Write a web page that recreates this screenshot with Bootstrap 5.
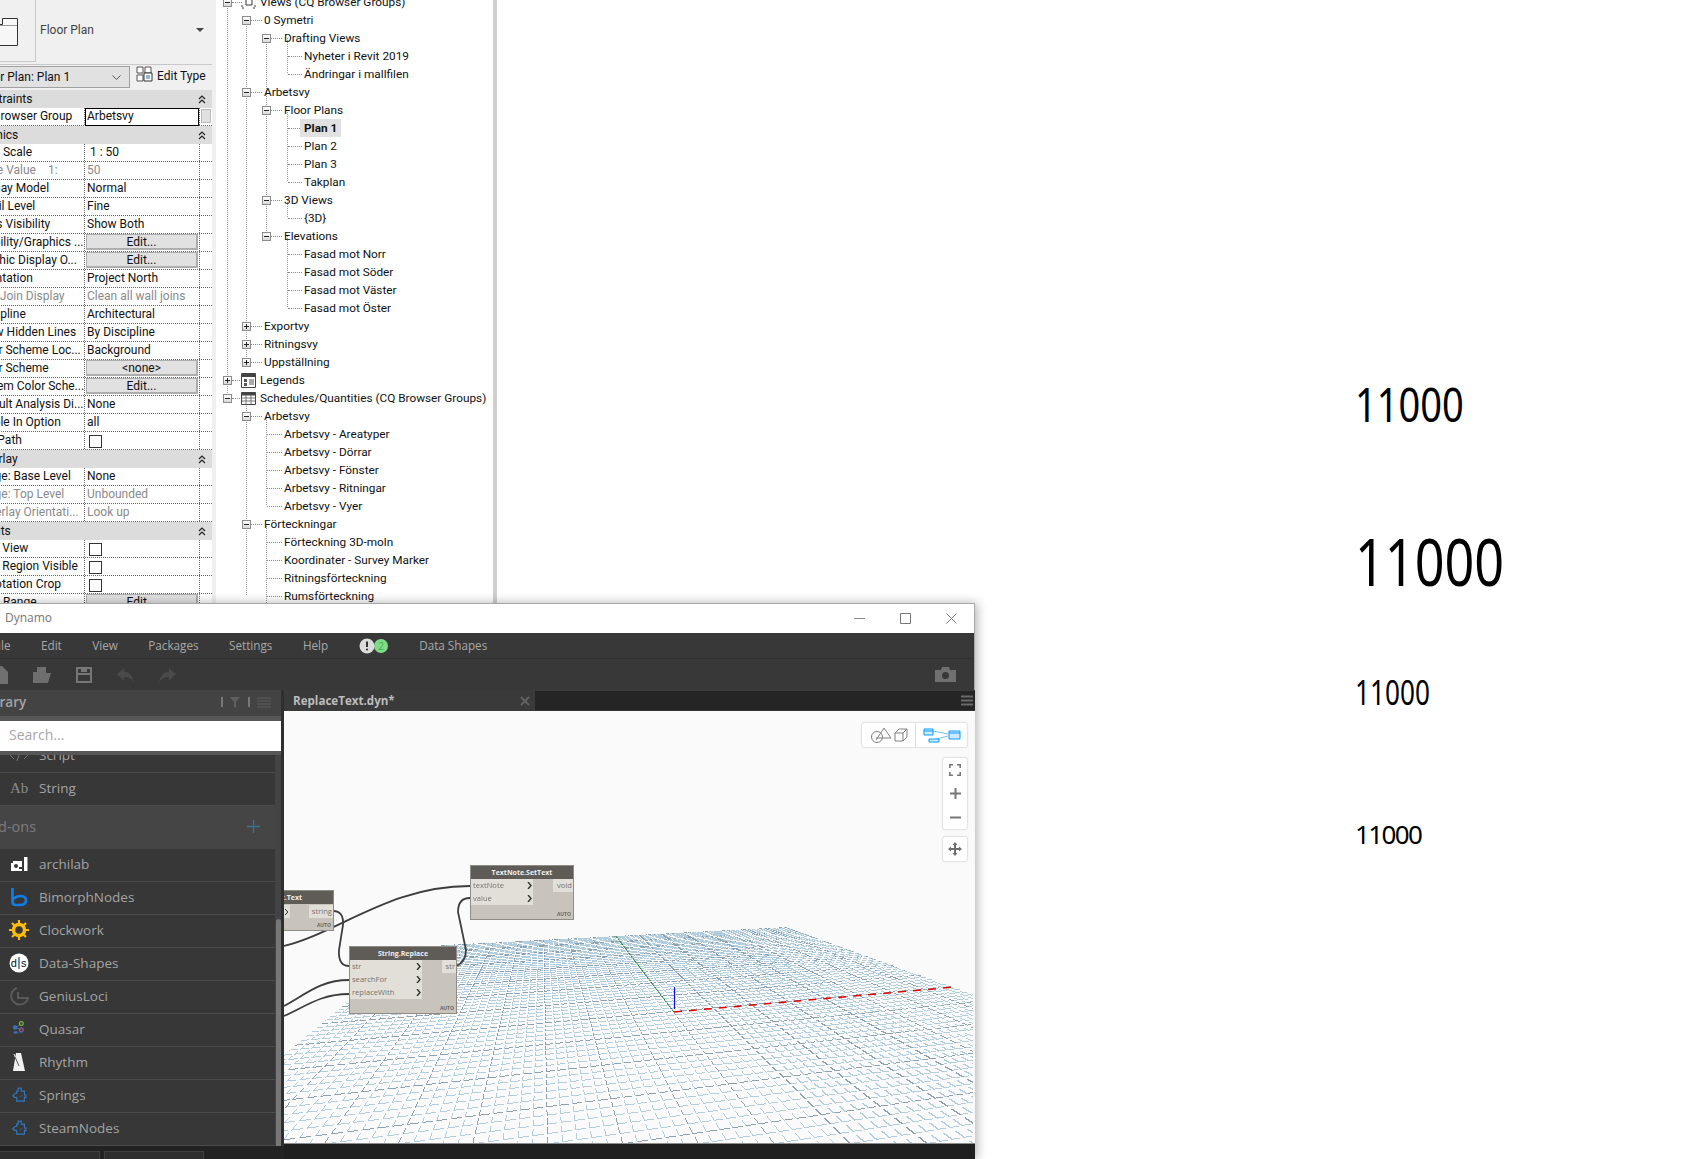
<!DOCTYPE html>
<html lang="sv">
<head>
  <meta charset="UTF-8">
  <meta name="viewport" content="width=device-width, initial-scale=1.0">
  <title>Revit och Dynamo</title>
  <link href="https://cdn.jsdelivr.net/npm/bootstrap@5.3.0/dist/css/bootstrap.min.css" rel="stylesheet">
  <style>
    html, body { height: 100%; margin: 0; overflow: hidden; background: #fff; }
    body { font-family: Roboto, "Liberation Sans", sans-serif; font-size: 12px; color: #111; }
    .desk { width: 1694px; height: 1159px; overflow: hidden; position: relative; }

    /* properties palette */
    .props { width: 212px; flex: none; background: #f0f0f0; }
    .props-inner { width: 238px; margin-left: -26px; }
    .type-box { height: 65px; border-bottom: 1px solid #c8c8c8; }
    .type-thumb { width: 62px; height: 62px; border: 1px solid #c8c8c8; border-top: 0; padding-right: 17px; padding-top: 3px; }
    .type-name { color: #444; padding-left: 4px; padding-bottom: 5px; }
    .inst-row { height: 25px; padding-top: 1px; }
    .inst-select { width: 156px; height: 22px; background: #e1e1e1; border: 1px solid #a0a0a0; padding-left: 2px; }
    .edit-type-icon { margin-left: 6px; margin-right: 4px; }
    .edit-type-text { padding-top: 1px; }
    .prop-head { height: 18px; background: #dcdcdc; padding-right: 6px; font-size: 12px; }
    .prop-head > span { margin-left: -3px; }
    .prop-row { height: 18px; background: #fff; border-bottom: 1px dotted #666; }
    .prop-name { width: 111px; flex: none; white-space: pre; overflow: hidden; border-right: 1px dotted #666; height: 100%; line-height: 17px; }
    .prop-val { width: 115px; flex: none; white-space: nowrap; padding-left: 2px; border-right: 1px dotted #666; height: 100%; line-height: 17px; }
    .is-grey { color: #8a8a8a; }
    .val-indent { padding-left: 5px; }
    .edit-input { border: 1px solid #000; height: 18px; line-height: 15px; padding-left: 1px; background: #fff; }
    .edit-spin { width: 10px; height: 14px; background: #e1e1e1; border: 1px solid #bbb; margin: 1px 1px; }
    .edit-btn { display: block; height: 16px; margin: 0 0 0 1px; width: 112px; background: #e1e1e1; border: 1px solid #adadad; border-bottom-width: 2px; border-right-width: 2px; text-align: center; line-height: 15px; }
    .chk { display: block; width: 13px; height: 13px; border: 1px solid #333; margin: 3px 0 0 2px; background: #fff; }

    /* project browser */
    .gap-strip { width: 4px; flex: none; background: #f0f0f0; }
    .browser { width: 277px; flex: none; overflow: hidden; position: relative; font-size: 11.8px; }
    .browser-edge { width: 4px; flex: none; background: #cfcfcf; }
    .tree { margin-top: -7px; }
    .tree-row { height: 18px; white-space: nowrap; }
    .tree-label { padding-top: 1px; }
    .tree-box { width: 9px; height: 9px; flex: none; border: 1px solid #8c8c8c; background: linear-gradient(#fff, #d8d8d8); position: relative; }
    .tree-box::before { content: ""; position: absolute; left: 1px; right: 1px; top: 3px; height: 1px; background: #222; }
    .tree-box.is-closed::after { content: ""; position: absolute; top: 1px; bottom: 1px; left: 3px; width: 1px; background: #222; }
    .tree-dots { flex: none; height: 0; border-top: 1px dotted #888; }
    .tree-sel { background: #e1e1e1; font-weight: 700; padding: 0 4px; margin-left: -4px; line-height: 18px; }
    .tree-lines { position: absolute; left: 0; top: 0; }

    /* annotations on the drawing */
    .anno { position: absolute; left: 1355px; font-family: "Noto Sans", sans-serif; color: #000; line-height: 1; transform-origin: left center; }
    .anno-a { top: 381px; font-size: 47px; transform: scaleX(.81); }
    .anno-b { top: 527px; font-size: 66px; transform: scaleX(.79); }
    .anno-c { top: 675px; font-size: 34px; transform: scaleX(.77); }
    .anno-d { top: 821px; font-size: 26px; letter-spacing: -1.6px; }

    /* dynamo window */
    .dyn { position: absolute; left: -30px; top: 603px; width: 1005px; height: 556px; background: #222; border-top: 1px solid #a8a8a8; border-right: 1px solid #a8a8a8; box-shadow: 2px 0 10px rgba(0,0,0,.3); font-family: "Open Sans", sans-serif; color: #aaa; display: flex; flex-direction: column; }
    .dyn-title { height: 29px; flex: none; background: #fff; color: #777; font-size: 12px; padding-left: 35px; padding-bottom: 2px; }
    .win-btn { width: 46px; text-align: center; }
    .dyn-menu { height: 26px; flex: none; background: #383838; border-bottom: 1px solid #303030; padding-left: 22px; gap: 30.5px; font-size: 11.7px; color: #a8a8a8; }
    .dyn-tools { height: 31px; flex: none; background: #383838; padding-left: 22px; padding-right: 18px; gap: 25px; }
    .dyn-body { flex: 1; min-height: 0; }
    .lib { width: 311px; flex: none; background: #373737; }
    .lib-head { height: 26px; background: #434343; padding-left: 10px; padding-right: 9px; padding-bottom: 2px; font-size: 13.5px; font-weight: 600; color: #a5a5a5; }
    .lib-search { height: 39px; background: #575757; padding: 5px 0 4px; }
    .lib-input { height: 30px; background: #fff; color: #a6a6a6; font-size: 14px; padding-left: 39px; line-height: 28px; }
    .lib-scroller { flex: 1; min-height: 0; overflow: hidden; }
    .lib-list { width: 305px; flex: none; overflow: hidden; height: 391px; }
    .lib-items { margin-top: -15px; }
    .lib-item { height: 33px; border-bottom: 1px solid #4b4b4b; font-size: 13.5px; color: #a4a4a4; padding-left: 39px; padding-bottom: 2px; gap: 10px; }
    .lib-icon { width: 20px; height: 20px; flex: none; }
    .lib-group { height: 43px; background: #454545; color: #7c7c7c; font-size: 14.5px; padding-left: 10px; padding-right: 15px; padding-bottom: 2px; }
    .lib-track { width: 6px; flex: none; background: #444; height: 391px; position: relative; }
    .lib-thumb { position: absolute; left: 1px; right: 0; top: 164px; bottom: 0; background: #777; border-radius: 3px 3px 0 0; }
    .split { width: 3px; flex: none; background: #2f2f2f; }
    .lib-foot { height: 13px; flex: none; background: #222; gap: 4px; }
    .foot-tab { width: 130px; height: 8px; margin-top: 5px; background: #2e2e2e; border: 1px solid #3f3f3f; border-bottom: 0; }
    .foot-tab + .foot-tab { width: 100px; }
    .work { width: 691px; flex: none; display: flex; flex-direction: column; }
    .tabs { height: 21px; flex: none; background: #383838; }
    .tab-cur { width: 250px; background: #3a3a3a; color: #bcbcbc; font-weight: 700; font-size: 11.6px; padding-left: 9px; padding-right: 4px; }
    .tab-rest { flex: 1; background: #252525; border: 1px solid #3c3c3c; border-bottom-color: #333; border-right: 0; padding-right: 2px; }
    .graph { height: 433px; flex: none; position: relative; background: #fafafa; border-bottom: 1px solid #8c8c8c; overflow: hidden; }
    .graph-foot { flex: 1; background: #1f1f1f; }
    #gridCanvas, .wires { position: absolute; left: 0; top: 0; }
    .node { position: absolute; background: #c8c4bc; border: 1px solid #8f8c85; font-size: 7.6px; color: #77736c; font-family: "Open Sans", sans-serif; }
    .node-head { height: 13px; background: #5f5b56; color: #eee; font-weight: 700; text-align: center; line-height: 13px; font-size: 7px; white-space: nowrap; }
    .node-in { background: #e2dfd8; position: absolute; left: 0; padding-left: 2px; }
    .node-out { background: #e2dfd8; position: absolute; right: 0; padding: 0 1px; text-align: right; line-height: 13px; }
    .node-port { height: 13px; line-height: 13px; position: relative; white-space: nowrap; }
    .node-port svg { position: absolute; right: 1px; top: 3px; }
    .node-auto { position: absolute; right: 2px; bottom: 1px; font-size: 5px; font-weight: 700; color: #6b675f; line-height: 7px; }
    .over-tools { position: absolute; background: #fff; border-radius: 2px; box-shadow: 0 0 2px rgba(0,0,0,.35); }
    .view-toggle { left: 578px; top: 12px; width: 105px; height: 24px; }
    .view-part { height: 100%; }
    .view-part + .view-part { border-left: 1px solid #ddd; }
    .zoom-tools { left: 659px; top: 47px; width: 24px; height: 71px; }
    .pan-tool { left: 659px; top: 126px; width: 24px; height: 24px; }
  </style>
</head>
<body>
<div class="desk">
  <div class="d-flex h-100">
    <div class="props overflow-hidden">
      <div class="props-inner">
        <div class="type-box d-flex">
          <div class="type-thumb d-flex align-items-center justify-content-end">
            <svg width="30" height="28" viewBox="0 0 30 28"><path d="M.5 6.500H14.500V.5H29.500V27.500H.5Z" fill="#f7f7f7" stroke="#333"/><path d="M.5 7.500H29" stroke="#999"/></svg>
          </div>
          <div class="flex-grow-1 d-flex align-items-center justify-content-between pe-2 type-name">
            <span>Floor Plan</span>
            <svg width="8" height="4"><path d="M0 0H8L4 4Z" fill="#444"/></svg>
          </div>
        </div>
        <div class="inst-row d-flex align-items-start">
          <div class="inst-select d-flex align-items-center justify-content-between pe-2"><span>Floor Plan: Plan 1</span>
            <svg width="9" height="5"><path d="M.5.5L4.5 4.5L8.5.5" fill="none" stroke="#555"/></svg></div>
          <svg class="edit-type-icon" width="17" height="16" viewBox="0 0 17 16"><path d="M1 1H7V7H1ZM9 1H15V7H9ZM1 9H7V15H1Z" fill="#fff" stroke="#555"/><path d="M8 7H16V15H8Z" fill="#fff" stroke="#333"/><path d="M10 10H14M10 12H14" stroke="#2a6fb0"/></svg>
          <span class="edit-type-text">Edit Type</span>
        </div>
        <div id="propRows"></div>
      </div>
    </div>
    <div class="gap-strip"></div>
    <div class="browser">
      <svg class="tree-lines" width="277" height="603" stroke="#999" stroke-dasharray="1 1" fill="none">
        <path d="M11.5 0V376M11.5 380V398M30.5 20V362M30.5 398V596M50.5 38V236M50.5 416V506M50.5 524V603M71.5 38V74M71.5 110V182M71.5 200V218M71.5 236V308"/>
      </svg>
      <div class="tree position-relative" id="tree"></div>
    </div>
    <div class="browser-edge"></div>
  </div>

  <div class="anno anno-a">11000</div>
  <div class="anno anno-b">11000</div>
  <div class="anno anno-c">11000</div>
  <div class="anno anno-d">11000</div>

  <div class="dyn">
    <div class="dyn-title d-flex align-items-center justify-content-between">
      <span>Dynamo</span>
      <div class="d-flex align-items-center">
        <div class="win-btn"><svg width="11" height="11"><path d="M0 5.500H11" stroke="#888"/></svg></div>
        <div class="win-btn"><svg width="11" height="11"><path d="M.5.5H10.500V10.500H.5Z" fill="none" stroke="#777"/></svg></div>
        <div class="win-btn"><svg width="11" height="11"><path d="M.5.5L10.500 10.500M10.500.5L.5 10.500" stroke="#777"/></svg></div>
      </div>
    </div>
    <div class="dyn-menu d-flex align-items-center">
      <span>File</span><span>Edit</span><span>View</span><span>Packages</span><span>Settings</span><span>Help</span>
      <svg width="30" height="16" viewBox="0 0 30 16"><circle cx="22" cy="8" r="7" fill="#7fdc86"/><text x="22" y="11.500" font-size="10" font-family="Open Sans" text-anchor="middle" fill="#4aa953">2</text><circle cx="8" cy="8" r="7.500" fill="#dcdcdc"/><path d="M8 3.500V9" stroke="#333" stroke-width="2"/><circle cx="8" cy="11.500" r="1.100" fill="#333"/></svg>
      <span>Data Shapes</span>
    </div>
    <div class="dyn-tools d-flex align-items-center">
      <svg width="16" height="18" viewBox="0 0 16 18"><path d="M0 0H10L16 6V18H0Z" fill="#707070"/></svg>
      <svg width="18" height="16" viewBox="0 0 18 16"><path d="M4 0H13V6H18L15 16H0V5H4Z" fill="#6e6e6e"/></svg>
      <svg width="16" height="16" viewBox="0 0 16 16"><path d="M1 1H15V15H1Z" fill="none" stroke="#777" stroke-width="2"/><path d="M1 7H15" stroke="#777" stroke-width="2"/><path d="M5 2H11V5H5Z" fill="#777"/></svg>
      <svg width="17" height="14" viewBox="0 0 17 14"><path d="M7 0V4C12 4 15 7 17 14C14 10 11 9 7 9V13L0 6Z" fill="#4a4a4a"/></svg>
      <svg width="17" height="14" viewBox="0 0 17 14"><path d="M10 0V4C5 4 2 7 0 14C3 10 6 9 10 9V13L17 6Z" fill="#4a4a4a"/></svg>
      <svg class="ms-auto" width="21" height="15" viewBox="0 0 21 15"><path d="M0 3H6L7 0H14L15 3H21V15H0Z" fill="#707070"/><circle cx="10.500" cy="8.500" r="3.500" fill="#383838"/></svg>
    </div>
    <div class="dyn-body d-flex">
      <div class="d-flex flex-column">
        <div class="d-flex flex-grow-1">
          <div class="lib d-flex flex-column">
            <div class="lib-head d-flex align-items-center justify-content-between">
              <span>Library</span>
              <svg width="52" height="14" viewBox="0 0 52 14"><path d="M2 2V12M29 2V12" stroke="#888" stroke-width="1.500"/><path d="M10 2H20L16 7V13L14 12V7Z" fill="#5e5e5e"/><path d="M37 3H51M37 6H51M37 9H51M37 12H51" stroke="#5e5e5e"/></svg>
            </div>
            <div class="lib-search"><div class="lib-input">Search...</div></div>
            <div class="d-flex lib-scroller">
              <div class="lib-list">
                <div class="lib-items" id="libItems"></div>
              </div>
              <div class="lib-track"><div class="lib-thumb"></div></div>
            </div>
          </div>
          <div class="split"></div>
        </div>
        <div class="lib-foot d-flex">
          <div class="foot-tab"></div><div class="foot-tab"></div>
        </div>
      </div>
      <div class="work">
        <div class="tabs d-flex">
          <div class="tab-cur d-flex align-items-center justify-content-between">
            <span>ReplaceText.dyn*</span>
            <svg width="10" height="10"><path d="M1 1L9 9M9 1L1 9" stroke="#626262" stroke-width="2"/></svg>
          </div>
          <div class="tab-rest d-flex align-items-center justify-content-end">
            <svg width="12" height="11"><path d="M0 1.500H12M0 5.500H12M0 9.500H12" stroke="#6a6a6a" stroke-width="2"/></svg>
          </div>
        </div>
        <div class="graph">
          <canvas id="gridCanvas" width="690" height="433"></canvas>
          <svg class="wires" width="690" height="433" fill="none" stroke="#3d3d3d" stroke-width="1.800">
            <path d="M0 235C56 221 106 175 186 175"/>
            <path d="M49 200Q60 200 59 214L55 239Q54 255 65 255"/>
            <path d="M0 295C21 284 36 269 65 269"/>
            <path d="M0 305C21 296 36 283 65 283"/>
            <path d="M172 255Q182 251 182 239L174 201Q174 187 186 187"/>
          </svg>

          <div class="node" style="left:-60px;top:179px;width:110px;height:41px">
            <div class="node-head">Element.Text</div>
            <div class="node-in" style="top:14px;left:59px;width:6px;height:13px"><svg width="4" height="6" style="position:absolute;left:1px;top:4px"><path d="M0 0L3 3L0 6" fill="none" stroke="#333"/></svg></div>
            <div class="node-out" style="top:14px;width:24px">string</div>
            <div class="node-auto">AUTO</div>
          </div>

          <div class="node" style="left:65px;top:235px;width:108px;height:68px">
            <div class="node-head">String.Replace</div>
            <div class="node-in" style="top:13px;width:72px">
              <div class="node-port">str<svg width="5" height="7"><path d="M1 0L4 3.500L1 7" fill="none" stroke="#333" stroke-width="1.400"/></svg></div>
              <div class="node-port">searchFor<svg width="5" height="7"><path d="M1 0L4 3.500L1 7" fill="none" stroke="#333" stroke-width="1.400"/></svg></div>
              <div class="node-port">replaceWith<svg width="5" height="7"><path d="M1 0L4 3.500L1 7" fill="none" stroke="#333" stroke-width="1.400"/></svg></div>
            </div>
            <div class="node-out" style="top:13px;width:14px">str</div>
            <div class="node-auto">AUTO</div>
          </div>

          <div class="node" style="left:186px;top:154px;width:104px;height:55px">
            <div class="node-head">TextNote.SetText</div>
            <div class="node-in" style="top:13px;width:62px">
              <div class="node-port">textNote<svg width="5" height="7"><path d="M1 0L4 3.500L1 7" fill="none" stroke="#333" stroke-width="1.400"/></svg></div>
              <div class="node-port">value<svg width="5" height="7"><path d="M1 0L4 3.500L1 7" fill="none" stroke="#333" stroke-width="1.400"/></svg></div>
            </div>
            <div class="node-out" style="top:13px;width:20px">void</div>
            <div class="node-auto">AUTO</div>
          </div>

          <div class="over-tools view-toggle d-flex">
            <div class="view-part d-flex align-items-center justify-content-center" style="width:53px">
              <svg width="38" height="16" viewBox="0 0 38 16" fill="none" stroke="#808080"><circle cx="7" cy="10" r="5.500"/><path d="M6 13L14 1L21 11H6"/><path d="M25 6H33V14H25ZM25 6L29 2H37V10L33 14M33 6L37 2"/></svg>
            </div>
            <div class="view-part d-flex align-items-center justify-content-center" style="width:52px">
              <svg width="38" height="15" viewBox="0 0 38 15"><path d="M10 3L25 6M10 12L25 8" stroke="#6ec0f5"/><path d="M1 1H10V7H1ZM26 3H37V11H26Z" fill="#cfeaff" stroke="#0a9bf5"/><path d="M1 3H10M26 5H37" stroke="#0a9bf5"/><path d="M6 11H16V14H6Z" fill="#cfeaff" stroke="#0a9bf5"/></svg>
            </div>
          </div>
          <div class="over-tools zoom-tools d-flex flex-column align-items-center justify-content-around">
            <svg width="12" height="12" fill="none" stroke="#777" stroke-width="1.600"><path d="M.8 4V.8H4M8 .8H11.200V4M.8 8V11.200H4M8 11.200H11.200V8"/></svg>
            <svg width="11" height="11"><path d="M0 5.500H11M5.500 0V11" stroke="#777" stroke-width="2"/></svg>
            <svg width="11" height="11"><path d="M0 5.500H11" stroke="#777" stroke-width="2"/></svg>
          </div>
          <div class="over-tools pan-tool d-flex align-items-center justify-content-center">
            <svg width="14" height="14" viewBox="0 0 14 14"><path d="M7 0L9.500 3H8V6H11V4.500L14 7L11 9.500V8H8V11H9.500L7 14L4.500 11H6V8H3V9.500L0 7L3 4.500V6H6V3H4.500Z" fill="#6f6f6f"/></svg>
          </div>
        </div>
        <div class="graph-foot"></div>
      </div>
    </div>
  </div>
</div>

<script src="https://cdn.jsdelivr.net/npm/bootstrap@5.3.0/dist/js/bootstrap.bundle.min.js"></script>
<script>
  // egenskaper: [typ, namn, värde]
  const props = [
    ['h', 'Constraints'],
    ['input', 'CQ Browser Group', 'Arbetsvy'],
    ['h', 'Graphics'],
    ['indent', 'View Scale', '1 : 50'],
    ['grey', 'Scale Value    1:', '50'],
    ['t', 'Display Model', 'Normal'],
    ['t', 'Detail Level', 'Fine'],
    ['t', 'Parts Visibility', 'Show Both'],
    ['btn', 'Visibility/Graphics ...', 'Edit...'],
    ['btn', 'Graphic Display O...', 'Edit...'],
    ['t', 'Orientation', 'Project North'],
    ['grey', 'Wall Join Display', 'Clean all wall joins'],
    ['t', 'Discipline', 'Architectural'],
    ['t', 'Show Hidden Lines', 'By Discipline'],
    ['t', 'Color Scheme Loc...', 'Background'],
    ['btn', 'Color Scheme', '&lt;none&gt;'],
    ['btn', 'System Color Sche...', 'Edit...'],
    ['t', 'Default Analysis Di...', 'None'],
    ['t', 'Visible In Option', 'all'],
    ['chk', 'Sun Path'],
    ['h', 'Underlay'],
    ['t', 'Range: Base Level', 'None'],
    ['grey', 'Range: Top Level', 'Unbounded'],
    ['grey', 'Underlay Orientati...', 'Look up'],
    ['h', 'Extents'],
    ['chk', 'Crop View'],
    ['chk', 'Crop Region Visible'],
    ['chk', 'Annotation Crop'],
    ['btn', 'View Range', 'Edit...']
  ];
  const chevrons = '<svg width="8" height="9" fill="none" stroke="#222" stroke-width="1.200"><path d="M1 4L4 1L7 4M1 8L4 5L7 8"/></svg>';
  document.getElementById('propRows').innerHTML = props.map(([kind, name, val]) => {
    if (kind === 'h') return `<div class="prop-head d-flex align-items-center justify-content-between"><span>${name}</span>${chevrons}</div>`;
    let cell = `<div class="prop-val">${val}</div>`;
    if (kind === 'indent') cell = `<div class="prop-val val-indent">${val}</div>`;
    if (kind === 'grey') cell = `<div class="prop-val is-grey">${val}</div>`;
    if (kind === 'btn') cell = `<div class="prop-val ps-0"><span class="edit-btn">${val}</span></div>`;
    if (kind === 'chk') cell = `<div class="prop-val"><span class="chk"></span></div>`;
    if (kind === 'input') cell = `<div class="prop-val p-0"><div class="edit-input">${val}</div></div><div class="edit-spin"></div>`;
    return `<div class="prop-row d-flex"><div class="prop-name ${kind === 'grey' ? 'is-grey' : ''}">${name}</div>${cell}</div>`;
  }).join('');

  // projektbläddrare: [linjens x, text x, namn, rutan, ikon]
  const tree = [
    [12, 44, 'Views (CQ Browser Groups)', 'open', 'view'],
    [31, 48, '0 Symetri', 'open'],
    [51, 68, 'Drafting Views', 'open'],
    [72, 88, 'Nyheter i Revit 2019'],
    [72, 88, 'Ändringar i mallfilen'],
    [31, 48, 'Arbetsvy', 'open'],
    [51, 68, 'Floor Plans', 'open'],
    [72, 88, 'Plan 1', '', 'sel'],
    [72, 88, 'Plan 2'],
    [72, 88, 'Plan 3'],
    [72, 88, 'Takplan'],
    [51, 68, '3D Views', 'open'],
    [72, 88, '{3D}'],
    [51, 68, 'Elevations', 'open'],
    [72, 88, 'Fasad mot Norr'],
    [72, 88, 'Fasad mot Söder'],
    [72, 88, 'Fasad mot Väster'],
    [72, 88, 'Fasad mot Öster'],
    [31, 48, 'Exportvy', 'closed'],
    [31, 48, 'Ritningsvy', 'closed'],
    [31, 48, 'Uppställning', 'closed'],
    [12, 44, 'Legends', 'closed', 'legend'],
    [12, 44, 'Schedules/Quantities (CQ Browser Groups)', 'open', 'sched'],
    [31, 48, 'Arbetsvy', 'open'],
    [51, 68, 'Arbetsvy - Areatyper'],
    [51, 68, 'Arbetsvy - Dörrar'],
    [51, 68, 'Arbetsvy - Fönster'],
    [51, 68, 'Arbetsvy - Ritningar'],
    [51, 68, 'Arbetsvy - Vyer'],
    [31, 48, 'Förteckningar', 'open'],
    [51, 68, 'Förteckning 3D-moln'],
    [51, 68, 'Koordinater - Survey Marker'],
    [51, 68, 'Ritningsförteckning'],
    [51, 68, 'Rumsförteckning']
  ];
  const treeIcons = {
    view: '<svg class="me-1" width="15" height="14" style="margin-left:-1px" fill="none" stroke="#333"><path d="M5 1H11V10H5Z"/><path d="M1 10V13H4M14 10V13H11" stroke-dasharray="2 1"/></svg>',
    legend: '<svg class="me-1" width="15" height="15" style="margin-left:-1px"><path d="M.5.5H14.500V14.500H.5Z" fill="#fff" stroke="#444"/><path d="M.5 2.500H14.500" stroke="#444" stroke-width="3"/><path d="M3 6H6V9H3ZM3 10H6V13H3Z" fill="#555"/><path d="M8 7H13M8 9H13M8 11H13" stroke="#555"/></svg>',
    sched: '<svg class="me-1" width="15" height="13" style="margin-left:-1px"><path d="M.5.5H14.500V12.500H.5Z" fill="#fff" stroke="#444"/><path d="M.5 2H14.500" stroke="#444" stroke-width="3"/><path d="M5 3V12M10 3V12M1 6H14M1 9H14" stroke="#777"/></svg>'
  };
  document.getElementById('tree').innerHTML = tree.map(([lx, tx, name, box, extra]) => {
    const boxHtml = box ? `<span class="tree-box ${box === 'closed' ? 'is-closed' : ''}"></span>` : '';
    const left = box ? lx - 5 : lx;
    const used = box ? left + 9 : left;
    const icon = treeIcons[extra];
    const dotsW = tx - used - (icon ? 18 : 2);
    const label = extra === 'sel' ? `<span class="tree-sel">${name}</span>` : `<span class="tree-label">${name}</span>`;
    return `<div class="tree-row d-flex align-items-center" style="padding-left:${left}px">${boxHtml}<span class="tree-dots" style="width:${dotsW}px"></span>${icon ? '' : '<span style="width:2px"></span>'}${icon || ''}${label}</div>`;
  }).join('');

  // biblioteket
  const puzzle = '<svg class="lib-icon" viewBox="-3 -3 26 26"><path d="M9 1H13V5H17V10H19V13H17V18H7V13H4L2 11L5 8H7V5H9Z" fill="none" stroke="#2f79bd" stroke-width="1.500"/><path d="M11 13L14 10" stroke="#2f79bd"/></svg>';
  const lib = [
    ['Script', '<svg class="lib-icon" viewBox="0 0 20 20" fill="none" stroke="#777"><path d="M5 6L1 10L5 14M15 6L19 10L15 14M12 4L8 16"/></svg>'],
    ['String', '<svg class="lib-icon" viewBox="0 0 20 20"><text x="1" y="15" font-family="Liberation Serif" font-size="15" fill="#8a8a8a">Ab</text></svg>'],
    ['group', 'Add-ons'],
    ['archilab', '<svg class="lib-icon" viewBox="0 0 20 20"><path d="M2 7H13V17H2Z" fill="#fff"/><circle cx="7" cy="12" r="2" fill="#373737"/><path d="M2 7H4V9H2ZM10 15H13V13H10Z" fill="#373737"/><path d="M15 3H18.500V17H15Z" fill="#fff"/></svg>'],
    ['BimorphNodes', '<svg class="lib-icon" viewBox="0 0 20 20"><path d="M3.500 1V15C3.500 17 5 18 7 18H11C15 18 17 16 17 13.500C17 11 15 9 12 9C9 9 6 10 3.500 13" fill="none" stroke="#0f7fe6" stroke-width="2.600"/></svg>'],
    ['Clockwork', '<svg class="lib-icon" viewBox="0 0 20 20"><circle cx="10" cy="10" r="5.500" fill="none" stroke="#fdbb0a" stroke-width="3.500"/><path d="M10 0V20M0 10H20M3 3L17 17M17 3L3 17" stroke="#fdbb0a" stroke-width="2.200" stroke-dasharray="3.500 13 3.500"/></svg>'],
    ['Data-Shapes', '<svg class="lib-icon" viewBox="0 0 20 20"><circle cx="10" cy="10" r="9.500" fill="#fff"/><text x="1.800" y="13.500" font-family="Liberation Sans" font-size="11" fill="#111">d</text><path d="M10 4V16" stroke="#111"/><text x="12" y="13.500" font-family="Liberation Sans" font-size="11" fill="#111">s</text></svg>'],
    ['GeniusLoci', '<svg class="lib-icon" viewBox="0 0 20 20" fill="none" stroke="#5a5a5a" stroke-width="2"><path d="M8 2A8.500 8.500 0 1 0 19 12H9V6"/></svg>'],
    ['Quasar', '<svg class="lib-icon" viewBox="-3 -2 26 26"><path d="M6 9L13 4M6 9L13 12" stroke="#4a8a5a"/><circle cx="5" cy="9" r="3" fill="#3f6fb5"/><circle cx="13" cy="4" r="2.500" fill="none" stroke="#6fbf3f" stroke-width="1.500"/><circle cx="13" cy="12" r="2.500" fill="none" stroke="#a04fa8" stroke-width="1.500"/><path d="M3 14H8V17H3Z" fill="#3f6fb5"/><path d="M9 16H15" stroke="#2a6fa0"/></svg>'],
    ['Rhythm', '<svg class="lib-icon" viewBox="0 0 20 20"><path d="M7 1H12L16 19H4Z" fill="#f2f2f2"/><path d="M10 14L5 2" stroke="#f2f2f2"/><path d="M10 14L6 5" stroke="#555"/></svg>'],
    ['Springs', puzzle],
    ['SteamNodes', puzzle]
  ];
  document.getElementById('libItems').innerHTML = lib.map(([name, html]) => {
    if (name === 'group') return `<div class="lib-group d-flex align-items-center justify-content-between"><span>${html}</span><svg width="13" height="13"><path d="M0 6.500H13M6.500 0V13" stroke="#3a7388" stroke-width="1.400"/></svg></div>`;
    return `<div class="lib-item d-flex align-items-center">${html}<span>${name}</span></div>`;
  }).join('');

  // rutnätet i 3D-vyn, punktvis så att det blir samma moaré
  function drawGrid() {
    const cv = document.getElementById('gridCanvas');
    const ctx = cv.getContext('2d');
    const W = cv.width, H = cv.height;
    const ox = 284, oy = 711;
    const p0 = [674 - ox, 1012 - oy], p1 = [955 - ox, 987 - oy], p2 = [787 - ox, 927 - oy], p3 = [616 - ox, 936 - oy];
    const dx1 = p1[0] - p2[0], dx2 = p3[0] - p2[0], sx = p0[0] - p1[0] + p2[0] - p3[0];
    const dy1 = p1[1] - p2[1], dy2 = p3[1] - p2[1], sy = p0[1] - p1[1] + p2[1] - p3[1];
    const den = dx1 * dy2 - dx2 * dy1;
    const g = (sx * dy2 - dx2 * sy) / den, h = (dx1 * sy - sx * dy1) / den;
    const a = p1[0] - p0[0] + g * p1[0], b = p3[0] - p0[0] + h * p3[0], c = p0[0];
    const d = p1[1] - p0[1] + g * p1[1], e = p3[1] - p0[1] + h * p3[1], f = p0[1];
    // inversen (adjunkt)
    const A = e - f * h, B = c * h - b, C = b * f - c * e;
    const D = f * g - d, E = a - c * g, F = c * d - a * f;
    const G = d * h - e * g, HH = b * g - a * h, I = a * e - b * d;
    const N = 40, major = 5;
    const uv = (x, y) => { const w = G * x + HH * y + I; return [(A * x + B * y + C) / w, (D * x + E * y + F) / w, w]; };
    const img = ctx.createImageData(W, H);
    const put = (x, y, col) => { const i = (y * W + x) * 4; img.data[i] = col[0]; img.data[i + 1] = col[1]; img.data[i + 2] = col[2]; img.data[i + 3] = 255; };
    const light = [178, 205, 222], dark = [140, 160, 176];
    for (let y = 200; y < H - 1; y++) {
      for (let x = 0; x < W - 1; x++) {
        const [u, v] = uv(x + .5, y + .5);
        if (Math.abs(u) > 1 || Math.abs(v) > 1) continue;
        const [ur, vr] = uv(x + 1.5, y + .5), [ud, vd] = uv(x + .5, y + 1.5);
        const uu = u * N, vv = v * N;
        const hitU = Math.floor(uu) !== Math.floor(ur * N) && Math.abs(ur - u) >= Math.abs(ud - u) * .5 || (Math.floor(uu) !== Math.floor(ud * N) && Math.abs(ud - u) > Math.abs(ur - u));
        const hitV = Math.floor(vv) !== Math.floor(vd * N) && Math.abs(vd - v) >= Math.abs(vr - v) * .5 || (Math.floor(vv) !== Math.floor(vr * N) && Math.abs(vr - v) > Math.abs(vd - v));
        // streckat längs linjen
        const fu = ((uu % 1) + 1) % 1, fv = ((vv % 1) + 1) % 1;
        const dashU = fv < .7, dashV = fu < .7;
        if (hitU && dashU) {
          const i = Math.round(Math.max(uu, ur * N, ud * N));
          put(x, y, i % major === 0 ? dark : light);
        } else if (hitV && dashV) {
          const i = Math.round(Math.max(vv, vd * N, vr * N));
          put(x, y, i % major === 0 ? dark : light);
        }
      }
    }
    ctx.putImageData(img, 0, 0);
    // axlarna
    ctx.lineWidth = 1.5;
    ctx.strokeStyle = '#e00000';
    ctx.setLineDash([8, 7]);
    ctx.beginPath(); ctx.moveTo(p0[0], p0[1]); ctx.lineTo(p1[0], p1[1]); ctx.stroke();
    ctx.lineWidth = 1;
    ctx.strokeStyle = '#0a7a0a';
    ctx.setLineDash([2, 1]);
    ctx.beginPath(); ctx.moveTo(p0[0], p0[1]); ctx.lineTo(p3[0], p3[1]); ctx.stroke();
    ctx.setLineDash([]);
    ctx.lineWidth = 1.2;
    ctx.strokeStyle = '#1010f0';
    ctx.beginPath(); ctx.moveTo(p0[0] + .5, p0[1] - 3); ctx.lineTo(p0[0] + .5, p0[1] - 25); ctx.stroke();
  }
  drawGrid();
</script>
</body>
</html>
